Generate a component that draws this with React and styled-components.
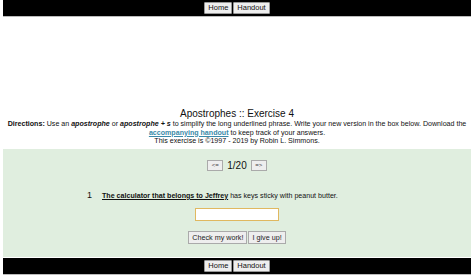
import React from 'react';
import styled, { createGlobalStyle } from 'styled-components';

const GlobalStyle = createGlobalStyle`
  body {
    margin: 0 3px;
    background: #ffffff;
    font-family: "Liberation Sans", Arial, sans-serif;
    color: #111;
  }
`

const NavBar = styled.div`
  background: #000;
  height: 17px;
  display: flex;
  justify-content: center;
  align-items: center;
  gap: 1px;
  border-bottom: 1px solid #bbb;
  box-sizing: border-box;
  margin-top: ${p => p.$top || 0}px;
`

const NavButton = styled.button`
  font-family: "Liberation Sans", Arial, sans-serif;
  font-size: 7.5px;
  padding: 0 3px;
  height: 12px;
  line-height: 10px;
  background: #eee;
  border: 1px solid #999;
  border-radius: 1px;
  color: #111;
`

const AdSpace = styled.div`
  height: 91px;
`

const Header = styled.div`
  text-align: center;
`

const Title = styled.div`
  font-size: 10px;
  line-height: 12px;
`

const Directions = styled.div`
  font-size: 7.1px;
  line-height: 8.5px;
  padding: 0 2px;

  a {
    color: #3a8aa8;
    font-weight: bold;
    text-decoration: underline;
  }
`

const Panel = styled.div`
  background: #e0eedf;
  margin-top: 3px;
  height: 108px;
  display: flex;
  flex-direction: column;
  align-items: center;
  padding-top: 11px;
  box-sizing: border-box;
`

const Pager = styled.div`
  display: flex;
  align-items: center;
  gap: 4px;
  font-size: 10px;
`

const SmallButton = styled.button`
  font-family: "Liberation Sans", Arial, sans-serif;
  font-size: 6px;
  height: 11px;
  width: 16px;
  padding: 0;
  background: #eee;
  border: 1px solid #aaa;
  color: #444;
`

const Question = styled.div`
  align-self: stretch;
  display: flex;
  gap: 10px;
  font-size: 7.1px;
  padding-left: 84px;
  margin-top: 21px;

  b {
    text-decoration: underline;
  }
`

const QNum = styled.span`
  font-size: 9px;
  line-height: 9px;
  margin-top: -1px;
`

const Answer = styled.input`
  margin-top: 8px;
  width: 84px;
  height: 13px;
  box-sizing: border-box;
  border: 1px solid #e0b860;
  outline: none;
  background: #fff;
`

const Actions = styled.div`
  display: flex;
  gap: 1px;
  margin-top: 10px;
`

const ActionButton = styled.button`
  font-family: "Liberation Sans", Arial, sans-serif;
  font-size: 7.2px;
  height: 13px;
  padding: 0 3px;
  background: #eee;
  border: 1px solid #aaa;
  color: #222;
`

export default function App() {
  return (
    <>
      <GlobalStyle />
      <NavBar>
        <NavButton>Home</NavButton>
        <NavButton>Handout</NavButton>
      </NavBar>
      <AdSpace />
      <Header>
        <Title>Apostrophes :: Exercise 4</Title>
        <Directions>
          <b>Directions:</b> Use an <b><i>apostrophe</i></b> or <b><i>apostrophe + s</i></b> to simplify the long underlined phrase. Write your new version in the box below. Download the <a href="#">accompanying handout</a> to keep track of your answers.
          <br />
          This exercise is ©1997 - 2019 by Robin L. Simmons.
        </Directions>
      </Header>
      <Panel>
        <Pager>
          <SmallButton>&lt;=</SmallButton>
          <span>1/20</span>
          <SmallButton>=&gt;</SmallButton>
        </Pager>
        <Question>
          <QNum>1</QNum>
          <span><b>The calculator that belongs to Jeffrey</b> has keys sticky with peanut butter.</span>
        </Question>
        <Answer />
        <Actions>
          <ActionButton>Check my work!</ActionButton>
          <ActionButton>I give up!</ActionButton>
        </Actions>
      </Panel>
      <NavBar $top={1}>
        <NavButton>Home</NavButton>
        <NavButton>Handout</NavButton>
      </NavBar>
    </>
  );
}
